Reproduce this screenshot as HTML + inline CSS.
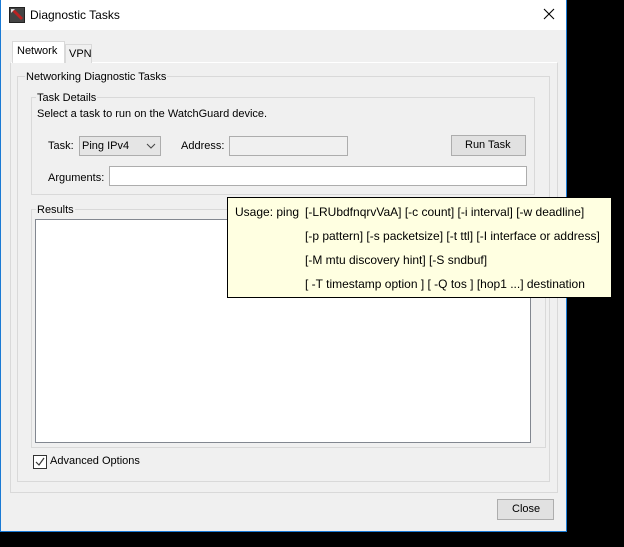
<!DOCTYPE html>
<html><head><style>
*{box-sizing:border-box;margin:0;padding:0}
body{width:624px;height:547px;background:#000;position:relative;overflow:hidden;font-family:"Liberation Sans",sans-serif;font-size:11px;color:#000}
.a{position:absolute}
.t{position:absolute;white-space:nowrap;line-height:14px}
.tt{font-size:12px}
</style></head><body>
<div class="a" style="left:0;top:0;width:567px;height:532px;background:#f0f0f0;border:1px solid #1a7ad4;border-top:none"></div>
<div class="a" style="left:1px;top:0;width:565px;height:30px;background:#fff"></div>
<svg class="a" style="left:9px;top:7px" width="16" height="16"><rect x="0.5" y="0.5" width="15" height="15" fill="#444" stroke="#222"/><path d="M3 4 L12 13 L14 11 L6 3Z" fill="#b22"/><path d="M2 2 L6 2 L2 6Z" fill="#ddd"/></svg>
<div class="t" style="left:30px;top:8px;font-size:12px">Diagnostic Tasks</div>
<svg class="a" style="left:543px;top:8px" width="12" height="12"><path d="M1 1L11 11M11 1L1 11" stroke="#000" stroke-width="1.1"/></svg>
<div class="a" style="left:10px;top:62px;width:548px;height:431px;border:1px solid #d9d9d9;border-top-color:#fff;background:#f0f0f0"></div>
<div class="a" style="left:65px;top:44px;width:27px;height:19px;border:1px solid #d9d9d9;border-bottom:none;background:#f0f0f0"></div>
<div class="t" style="left:69px;top:47px">VPN</div>
<div class="a" style="left:12px;top:41px;width:53px;height:22px;border:1px solid #d9d9d9;border-bottom:none;background:#fff"></div>
<div class="t" style="left:17px;top:44px">Network</div>
<div class="a" style="left:17px;top:76px;width:533px;height:406px;border:1px solid #d9d9d9"></div>
<div class="t" style="left:25px;top:70px;background:#f0f0f0;padding:0 1px">Networking Diagnostic Tasks</div>
<div class="a" style="left:31px;top:97px;width:504px;height:98px;border:1px solid #d9d9d9"></div>
<div class="t" style="left:36px;top:91px;background:#f0f0f0;padding:0 1px">Task Details</div>
<div class="t" style="left:37px;top:107px">Select a task to run on the WatchGuard device.</div>
<div class="t" style="left:48px;top:139px">Task:</div>
<div class="a" style="left:79px;top:136px;width:82px;height:20px;background:#e5e5e5;border:1px solid #adadad"></div>
<div class="t" style="left:82px;top:139px">Ping IPv4</div>
<svg class="a" style="left:146px;top:143px" width="10" height="6"><path d="M1 1L5 5L9 1" fill="none" stroke="#444"/></svg>
<div class="t" style="left:181px;top:139px">Address:</div>
<div class="a" style="left:229px;top:136px;width:119px;height:20px;background:#f0f0f0;border:1px solid #adadad"></div>
<div class="a" style="left:451px;top:135px;width:75px;height:21px;background:#e1e1e1;border:1px solid #adadad"></div>
<div class="t" style="left:465px;top:138px">Run Task</div>
<div class="t" style="left:48px;top:171px">Arguments:</div>
<div class="a" style="left:109px;top:166px;width:418px;height:20px;background:#fff;border:1px solid #adadad"></div>
<div class="a" style="left:31px;top:209px;width:515px;height:239px;border:1px solid #d9d9d9"></div>
<div class="t" style="left:36px;top:203px;background:#f0f0f0;padding:0 1px">Results</div>
<div class="a" style="left:35px;top:219px;width:496px;height:224px;background:#fff;border:1px solid #828790"></div>
<div class="a" style="left:33px;top:455px;width:14px;height:14px;background:#fff;border:1px solid #333"></div>
<svg class="a" style="left:34px;top:456px" width="12" height="12"><path d="M2 6L5 9L10 2" fill="none" stroke="#333" stroke-width="1.2"/></svg>
<div class="t" style="left:50px;top:454px">Advanced Options</div>
<div class="a" style="left:497px;top:499px;width:57px;height:21px;background:#e1e1e1;border:1px solid #adadad"></div>
<div class="t" style="left:512px;top:502px">Close</div>
<div class="a" style="left:227px;top:197px;width:385px;height:101px;background:#ffffe1;border:1px solid #000"></div>
<div class="t tt" style="left:235px;top:205px">Usage: ping</div>
<div class="t tt" style="left:305px;top:205px">[-LRUbdfnqrvVaA] [-c count] [-i interval] [-w deadline]</div>
<div class="t tt" style="left:305px;top:229px">[-p pattern] [-s packetsize] [-t ttl] [-I interface or address]</div>
<div class="t tt" style="left:305px;top:253px">[-M mtu discovery hint] [-S sndbuf]</div>
<div class="t tt" style="left:305px;top:277px">[ -T timestamp option ] [ -Q tos ] [hop1 ...] destination</div>
</body></html>
